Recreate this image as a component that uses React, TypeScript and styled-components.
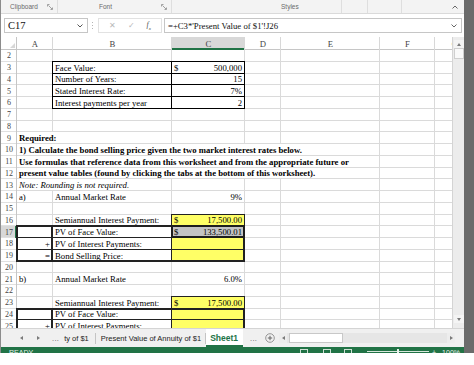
import React from 'react';
import styled, { createGlobalStyle, css } from 'styled-components';

const SERIF = `"Liberation Serif", "Times New Roman", serif`;
const SANS = `"Liberation Sans", Arial, sans-serif`;
const GREEN = '#217346';
const GRID = '#dadada';

const GlobalStyle = createGlobalStyle`
  html, body { margin: 0; padding: 0; background: #fff; }
  body { width: 474px; height: 365px; overflow: hidden; }
`;

const Page = styled.div`
  width: 474px;
  height: 365px;
  background: #fff;
`;

const Frame = styled.div`
  display: flex;
  height: 353px;
`;

const Window = styled.div`
  width: 464px;
  box-sizing: border-box;
  border-left: 1px solid #8c8c8c;
  display: flex;
  flex-direction: column;
  overflow: hidden;
  background: #fff;
`;

const RightEdge = styled.div`
  width: 10px;
  background: #6b6b6b;
`;

/* ---------- Ribbon ---------- */
const Ribbon = styled.div`
  height: 14px;
  box-sizing: border-box;
  background: #f3f3f3;
  border-bottom: 1px solid #dadada;
  display: flex;
  align-items: center;
`;

const RibbonGroup = styled.div<{ $w: number; $pl: number }>`
  width: ${p => p.$w}px;
  height: 100%;
  box-sizing: border-box;
  padding-left: ${p => p.$pl}px;
  padding-right: 4px;
  border-right: 1px solid #dedede;
  display: flex;
  align-items: center;
`;

const RibbonLabel = styled.span`
  font-family: ${SANS};
  font-size: 6.5px;
  color: #6a6a6a;
`;

const Launcher = styled.svg`
  margin-left: auto;
  width: 6px;
  height: 6px;
`;

const RibbonRest = styled.div`
  flex: 1;
  height: 100%;
  display: flex;
  align-items: center;
  justify-content: flex-end;
  padding-right: 6px;
`;

/* ---------- Formula bar ---------- */
const FormulaBar = styled.div`
  height: 23px;
  box-sizing: border-box;
  display: flex;
  align-items: center;
  padding-left: 3px;
  background: #fff;
`;

const NameBox = styled.div`
  width: 84px;
  height: 15px;
  box-sizing: border-box;
  border: 1px solid #c6c6c6;
  display: flex;
  align-items: center;
  padding: 0 4px 0 3px;
  font-family: ${SERIF};
  font-size: 10.5px;
  color: #111;
`;

const Chevron = styled.svg`
  margin-left: auto;
  width: 6px;
  height: 4px;
`;

const Grip = styled.div`
  width: 9px;
  display: flex;
  flex-direction: column;
  align-items: center;
  gap: 2px;
  & > i {
    width: 1px;
    height: 1px;
    background: #b5b5b5;
  }
`;

const FxBox = styled.div`
  width: 64px;
  height: 15px;
  box-sizing: border-box;
  margin-left: 1px;
  border: 1px solid #e2e2e2;
  display: flex;
  align-items: center;
  justify-content: space-around;
  padding: 0 4px;
`;

const FxGlyph = styled.span<{ $italic?: boolean }>`
  font-family: ${p => (p.$italic ? SERIF : SANS)};
  font-style: ${p => (p.$italic ? 'italic' : 'normal')};
  font-size: 8px;
  color: ${p => (p.$italic ? '#555' : '#b8b8b8')};
`;

const FxSub = styled.sub`
  font-size: 5px;
`;

const FormulaInput = styled.div`
  flex: 1;
  height: 15px;
  box-sizing: border-box;
  margin: 0 2px 0 2px;
  border: 1px solid #c6c6c6;
  display: flex;
  align-items: center;
  padding: 0 4px 0 3px;
  font-family: ${SERIF};
  font-size: 8.7px;
  color: #111;
  white-space: nowrap;
`;

/* ---------- Sheet ---------- */
const SheetArea = styled.div`
  height: 291px;
  display: flex;
`;

const GridWrap = styled.div`
  width: 451px;
  overflow: hidden;
`;

const Grid = styled.div`
  display: grid;
  width: max-content;
  grid-template-columns: 16px 36px 119px 73px 36px 99px 55px 40px;
  grid-template-rows: 13px repeat(24, 11.75px);
`;

const Corner = styled.div`
  position: relative;
  background: #fff;
  box-shadow: inset -1px -1px 0 #c6c6c6;
  &::after {
    content: '';
    position: absolute;
    right: 2px;
    bottom: 2px;
    border-style: solid;
    border-width: 0 0 5px 5px;
    border-color: transparent transparent #d8d8d8 transparent;
  }
`;

const ColHeader = styled.div<{ $sel?: boolean }>`
  background: ${p => (p.$sel ? '#d8d8d8' : '#fff')};
  box-shadow: inset -1px 0 0 #d8d8d8,
    inset 0 ${p => (p.$sel ? '-2px' : '-1px')} 0 ${p => (p.$sel ? GREEN : '#c6c6c6')};
  font-family: ${SERIF};
  font-size: 8.7px;
  color: #444;
  display: flex;
  align-items: center;
  justify-content: center;
  padding-top: 1px;
`;

const RowHeader = styled.div<{ $sel?: boolean }>`
  background: ${p => (p.$sel ? '#d8d8d8' : '#fff')};
  box-shadow: inset ${p => (p.$sel ? '-2px' : '-1px')} 0 0 ${p => (p.$sel ? GREEN : '#c6c6c6')},
    inset 0 -1px 0 #e0e0e0;
  font-family: ${SERIF};
  font-size: 8px;
  color: #444;
  display: flex;
  align-items: center;
  justify-content: center;
`;

type Borders = { t?: number; r?: number; b?: number; l?: number };

const Cell = styled.div<{
  $span: number;
  $fill?: string;
  $bold?: boolean;
  $italic?: boolean;
  $align: 'left' | 'right' | 'between';
  $bd?: Borders;
  $bc?: string;
}>`
  position: relative;
  grid-column: span ${p => p.$span};
  background: ${p => p.$fill || '#fff'};
  box-shadow: ${p => (p.$fill ? 'none' : `inset -1px -1px 0 ${GRID}`)};
  font-family: ${SERIF};
  font-size: 8.7px;
  line-height: 10px;
  font-weight: ${p => (p.$bold ? 700 : 400)};
  font-style: ${p => (p.$italic ? 'italic' : 'normal')};
  color: #000;
  white-space: nowrap;
  display: flex;
  align-items: flex-end;
  justify-content: ${p =>
    p.$align === 'right' ? 'flex-end' : p.$align === 'between' ? 'space-between' : 'flex-start'};
  padding: 0 3px 1px 2px;
  box-sizing: border-box;
  ${p =>
    p.$bd &&
    css`
      &::after {
        content: '';
        position: absolute;
        top: -1px;
        left: -1px;
        right: 0;
        bottom: 0;
        box-sizing: border-box;
        border-style: solid;
        border-color: ${p.$bc || '#000'};
        border-width: ${p.$bd.t || 0}px ${p.$bd.r || 0}px ${p.$bd.b || 0}px ${p.$bd.l || 0}px;
        pointer-events: none;
      }
    `}
`;

const VScroll = styled.div`
  width: 12px;
  box-sizing: border-box;
  background: #ececec;
  border-left: 1px solid #d4d4d4;
  display: flex;
  flex-direction: column;
  align-items: center;
  padding: 3px 0 5px;
`;

const ScrollBtn = styled.div`
  width: 10px;
  height: 8px;
  display: flex;
  align-items: center;
  justify-content: center;
  background: #f4f4f4;
`;

const VThumb = styled.div`
  width: 10px;
  height: 11px;
  box-sizing: border-box;
  background: #f9f9f9;
  border: 1px solid #cfcfcf;
`;

const Spacer = styled.div`
  flex: 1;
`;

/* ---------- Tabs ---------- */
const TabBar = styled.div`
  height: 19px;
  box-sizing: border-box;
  background: #f0f0f0;
  border-top: 1px solid #d4d4d4;
  display: flex;
  align-items: stretch;
  padding-left: 16px;
  font-family: ${SANS};
  font-size: 7.5px;
  color: #222;
`;

const NavBtn = styled.div<{ $ml?: number }>`
  width: 9px;
  margin-left: ${p => p.$ml || 0}px;
  display: flex;
  align-items: center;
  justify-content: center;
`;

const Dots = styled.div<{ $ml: number; $mr?: number }>`
  margin-left: ${p => p.$ml}px;
  margin-right: ${p => p.$mr || 0}px;
  display: flex;
  align-items: center;
  color: #555;
  letter-spacing: 0.3px;
`;

const SheetTab = styled.div<{ $active?: boolean; $pl: number; $pr: number; $sep?: boolean }>`
  display: flex;
  align-items: center;
  padding: 0 ${p => p.$pr}px 0 ${p => p.$pl}px;
  position: relative;
  background: ${p => (p.$active ? '#fff' : 'transparent')};
  color: ${p => (p.$active ? GREEN : '#222')};
  font-weight: ${p => (p.$active ? 700 : 400)};
  font-size: ${p => (p.$active ? 8.5 : 7.5)}px;
  ${p =>
    p.$sep &&
    css`
      &::after {
        content: '';
        position: absolute;
        right: 0;
        top: 4px;
        bottom: 3px;
        width: 1px;
        background: #c4c4c4;
      }
    `}
  ${p =>
    p.$active &&
    css`
      box-shadow: inset 0 -2px 0 ${GREEN};
    `}
`;

const AddSheet = styled.div`
  margin-left: 8px;
  display: flex;
  align-items: center;
`;

const HScroll = styled.div`
  margin-left: 4px;
  width: 176px;
  display: flex;
  align-items: center;
  gap: 2px;
`;

const HTrack = styled.div`
  flex: 1;
  height: 10px;
  background: #e6e6e6;
  display: flex;
  align-items: center;
  gap: 2px;
`;

const HBtn = styled.div`
  width: 8px;
  height: 10px;
  background: #ededed;
  display: flex;
  align-items: center;
  justify-content: center;
`;

const HThumb = styled.div`
  width: 54px;
  height: 10px;
  box-sizing: border-box;
  background: #fff;
  border: 1px solid #c8c8c8;
`;

/* ---------- Status bar ---------- */
const StatusBar = styled.div`
  height: 6px;
  background: ${GREEN};
  overflow: hidden;
  display: flex;
  align-items: flex-start;
  padding: 2px 0 0 8px;
  box-sizing: border-box;
  font-family: ${SANS};
  font-size: 7px;
  line-height: 8px;
  color: #e8f0ea;
`;

const StatusRight = styled.div`
  margin-left: auto;
  display: flex;
  align-items: flex-start;
  padding-right: 4px;
`;

const ViewIcon = styled.div<{ $ml: number; $w: number }>`
  margin-left: ${p => p.$ml}px;
  width: ${p => p.$w}px;
  height: 8px;
  box-sizing: border-box;
  border: 1px solid #cfe0d4;
  border-bottom: none;
`;

const SliderLine = styled.div`
  width: 62px;
  height: 1px;
  margin: 2px 3px 0;
  background: #d8e7dc;
  position: relative;
  &::after {
    content: '';
    position: absolute;
    left: 30px;
    top: -2px;
    width: 2px;
    height: 8px;
    background: #e8f0ea;
  }
`;

const StatusText = styled.span<{ $ml?: number }>`
  margin-left: ${p => p.$ml || 0}px;
`;

/* ---------- Data ---------- */
type CellDef = {
  col: number;
  span?: number;
  text?: string;
  right?: string;
  align?: 'left' | 'right' | 'between';
  bold?: boolean;
  italic?: boolean;
  fill?: string;
  bd?: Borders;
  bc?: string;
};

const YEL = '#ffff66';
const ALL1: Borders = { t: 1, r: 1, b: 1, l: 1 };

const data: Record<number, CellDef[]> = {
  3: [
    { col: 2, text: 'Face Value:', bd: ALL1 },
    { col: 3, text: '$', right: '500,000', align: 'between', bd: ALL1 },
  ],
  4: [
    { col: 2, text: 'Number of Years:', bd: ALL1 },
    { col: 3, text: '15', align: 'right', bd: ALL1 },
  ],
  5: [
    { col: 2, text: 'Stated Interest Rate:', bd: ALL1 },
    { col: 3, text: '7%', align: 'right', bd: ALL1 },
  ],
  6: [
    { col: 2, text: 'Interest payments per year', bd: ALL1 },
    { col: 3, text: '2', align: 'right', bd: ALL1 },
  ],
  9: [{ col: 1, span: 2, text: 'Required:', bold: true }],
  10: [
    {
      col: 1,
      span: 5,
      text: '1) Calculate the bond selling price given the two market interest rates below.',
      bold: true,
    },
  ],
  11: [
    {
      col: 1,
      span: 5,
      text: 'Use formulas that reference data from this worksheet and from the appropriate future or',
      bold: true,
    },
  ],
  12: [
    {
      col: 1,
      span: 5,
      text: 'present value tables (found by clicking the tabs at the bottom of this worksheet).',
      bold: true,
    },
  ],
  13: [{ col: 1, span: 2, text: 'Note:  Rounding is not required.', italic: true }],
  14: [
    { col: 1, text: 'a)' },
    { col: 2, text: 'Annual Market Rate' },
    { col: 3, text: '9%', align: 'right' },
  ],
  16: [
    { col: 2, text: 'Semiannual Interest Payment:' },
    { col: 3, text: '$', right: '17,500.00', align: 'between', fill: YEL, bd: ALL1, bc: '#222' },
  ],
  17: [
    { col: 1, bd: { t: 2, l: 2, r: 2, b: 1 }, bc: '#222' },
    { col: 2, text: 'PV of Face Value:', bd: { t: 2, r: 1, b: 1 }, bc: '#222' },
    {
      col: 3,
      text: '$',
      right: '133,500.01',
      align: 'between',
      fill: '#c3c3c3',
      bd: { t: 2, r: 2, b: 2, l: 2 },
      bc: '#1d1d1d',
    },
  ],
  18: [
    { col: 1, text: '+', align: 'right', bd: { l: 2, r: 2, b: 1 }, bc: '#222' },
    { col: 2, text: 'PV of Interest Payments:', bd: { r: 1, b: 1 }, bc: '#222' },
    { col: 3, fill: YEL, bd: { r: 2, b: 1 }, bc: '#222' },
  ],
  19: [
    { col: 1, text: '=', align: 'right', bd: { l: 2, r: 2, b: 2 }, bc: '#222' },
    { col: 2, text: 'Bond Selling Price:', bd: { r: 1, b: 2 }, bc: '#222' },
    { col: 3, fill: YEL, bd: { r: 2, b: 2 }, bc: '#222' },
  ],
  21: [
    { col: 1, text: 'b)' },
    { col: 2, text: 'Annual Market Rate' },
    { col: 3, text: '6.0%', align: 'right' },
  ],
  23: [
    { col: 2, text: 'Semiannual Interest Payment:' },
    { col: 3, text: '$', right: '17,500.00', align: 'between', fill: YEL, bd: ALL1, bc: '#222' },
  ],
  24: [
    { col: 1, bd: { t: 2, l: 2, r: 2, b: 1 }, bc: '#222' },
    { col: 2, text: 'PV of Face Value:', bd: { t: 2, r: 1, b: 1 }, bc: '#222' },
    { col: 3, fill: YEL, bd: { t: 2, r: 2, b: 1 }, bc: '#222' },
  ],
  25: [
    { col: 1, text: '+', align: 'right', bd: { l: 2, r: 2, b: 1 }, bc: '#222' },
    { col: 2, text: 'PV of Interest Payments:', bd: { r: 1, b: 1 }, bc: '#222' },
    { col: 3, fill: YEL, bd: { r: 2, b: 1 }, bc: '#222' },
  ],
};

const COLS = ['A', 'B', 'C', 'D', 'E', 'F', 'G'];
const ROWS = Array.from({ length: 24 }, (_, i) => i + 2);

function renderRow(r: number) {
  const defs = data[r] || [];
  const out: React.ReactNode[] = [
    <RowHeader key={`h${r}`} $sel={r === 17}>
      {r}
    </RowHeader>,
  ];
  let col = 1;
  while (col <= 7) {
    const d = defs.find(x => x.col === col);
    if (d) {
      const span = d.span || 1;
      out.push(
        <Cell
          key={`${r}-${col}`}
          $span={span}
          $fill={d.fill}
          $bold={d.bold}
          $italic={d.italic}
          $align={d.align || 'left'}
          $bd={d.bd}
          $bc={d.bc}
        >
          {d.text && <span>{d.text}</span>}
          {d.right && <span>{d.right}</span>}
        </Cell>
      );
      col += span;
    } else {
      out.push(<Cell key={`${r}-${col}`} $span={1} $align="left" />);
      col += 1;
    }
  }
  return out;
}

const LauncherIcon = () => (
  <Launcher viewBox="0 0 6 6">
    <path d="M0.5 2.5V0.5H2.5M5.5 3.5V5.5H3.5M1.5 1.5L5 5" stroke="#8a8a8a" strokeWidth="0.8" fill="none" />
  </Launcher>
);

const Tri = ({ dir, color = '#7a7a7a', size = 4 }: { dir: 'l' | 'r' | 'u' | 'd'; color?: string; size?: number }) => {
  const pts =
    dir === 'l'
      ? '3,0 0,2 3,4'
      : dir === 'r'
      ? '0,0 3,2 0,4'
      : dir === 'u'
      ? '0,3 2,0 4,3'
      : '0,0 4,0 2,3';
  const vb = dir === 'l' || dir === 'r' ? '0 0 3 4' : '0 0 4 3';
  const w = dir === 'l' || dir === 'r' ? size * 0.75 : size;
  const h = dir === 'l' || dir === 'r' ? size : size * 0.75;
  return (
    <svg width={w} height={h} viewBox={vb}>
      <polygon points={pts} fill={color} />
    </svg>
  );
};

export default function App() {
  return (
    <Page>
      <GlobalStyle />
      <Frame>
        <Window>
          <Ribbon>
            <RibbonGroup $w={57} $pl={9}>
              <RibbonLabel>Clipboard</RibbonLabel>
              <LauncherIcon />
            </RibbonGroup>
            <RibbonGroup $w={114} $pl={41}>
              <RibbonLabel>Font</RibbonLabel>
              <LauncherIcon />
            </RibbonGroup>
            <RibbonGroup $w={170} $pl={109}>
              <RibbonLabel>Styles</RibbonLabel>
            </RibbonGroup>
            <RibbonGroup $w={26} $pl={0} />
            <RibbonGroup $w={34} $pl={0} />
            <RibbonRest>
              <svg width="6" height="4" viewBox="0 0 6 4">
                <path d="M0.5 3.5L3 1L5.5 3.5" stroke="#666" strokeWidth="1" fill="none" />
              </svg>
            </RibbonRest>
          </Ribbon>

          <FormulaBar>
            <NameBox>
              C17
              <Chevron viewBox="0 0 6 4">
                <path d="M0.5 0.5L3 3L5.5 0.5" stroke="#555" strokeWidth="1" fill="none" />
              </Chevron>
            </NameBox>
            <Grip>
              <i />
              <i />
              <i />
            </Grip>
            <FxBox>
              <FxGlyph>✕</FxGlyph>
              <FxGlyph>✓</FxGlyph>
              <FxGlyph $italic>
                f<FxSub>x</FxSub>
              </FxGlyph>
            </FxBox>
            <FormulaInput>
              =+C3*'Present Value of $1'!J26
              <Chevron viewBox="0 0 6 4">
                <path d="M0.5 0.5L3 3L5.5 0.5" stroke="#666" strokeWidth="1" fill="none" />
              </Chevron>
            </FormulaInput>
          </FormulaBar>

          <SheetArea>
            <GridWrap>
              <Grid>
                <Corner />
                {COLS.map(c => (
                  <ColHeader key={c} $sel={c === 'C'}>
                    {c}
                  </ColHeader>
                ))}
                {ROWS.map(r => renderRow(r))}
              </Grid>
            </GridWrap>
            <VScroll>
              <ScrollBtn>
                <Tri dir="u" />
              </ScrollBtn>
              <VThumb />
              <Spacer />
              <ScrollBtn>
                <Tri dir="d" />
              </ScrollBtn>
            </VScroll>
          </SheetArea>

          <TabBar>
            <NavBtn>
              <Tri dir="l" />
            </NavBtn>
            <NavBtn $ml={8}>
              <Tri dir="r" />
            </NavBtn>
            <Dots $ml={9}>...</Dots>
            <SheetTab $pl={5} $pr={7} $sep>
              ty of $1
            </SheetTab>
            <SheetTab $pl={5} $pr={5} $sep>
              Present Value of Annuity of $1
            </SheetTab>
            <SheetTab $active $pl={4} $pr={5}>
              Sheet1
            </SheetTab>
            <Dots $ml={7}>...</Dots>
            <AddSheet>
              <svg width="10" height="10" viewBox="0 0 10 10">
                <circle cx="5" cy="5" r="4.3" stroke="#8a8a8a" strokeWidth="0.9" fill="none" />
                <path d="M5 2.8V7.2M2.8 5H7.2" stroke="#666" strokeWidth="1" />
              </svg>
            </AddSheet>
            <HScroll>
              <HTrack>
                <HBtn>
                  <Tri dir="l" size={4} />
                </HBtn>
                <HThumb />
                <Spacer />
                <HBtn>
                  <Tri dir="r" size={4} />
                </HBtn>
              </HTrack>
            </HScroll>
          </TabBar>

          <StatusBar>
            <StatusText>READY</StatusText>
            <StatusRight>
              <ViewIcon $ml={0} $w={8} />
              <ViewIcon $ml={15} $w={8} />
              <ViewIcon $ml={13} $w={8} />
              <StatusText $ml={10}>-</StatusText>
              <SliderLine />
              <StatusText>+</StatusText>
              <StatusText $ml={6}>100%</StatusText>
            </StatusRight>
          </StatusBar>
        </Window>
        <RightEdge />
      </Frame>
    </Page>
  );
}
